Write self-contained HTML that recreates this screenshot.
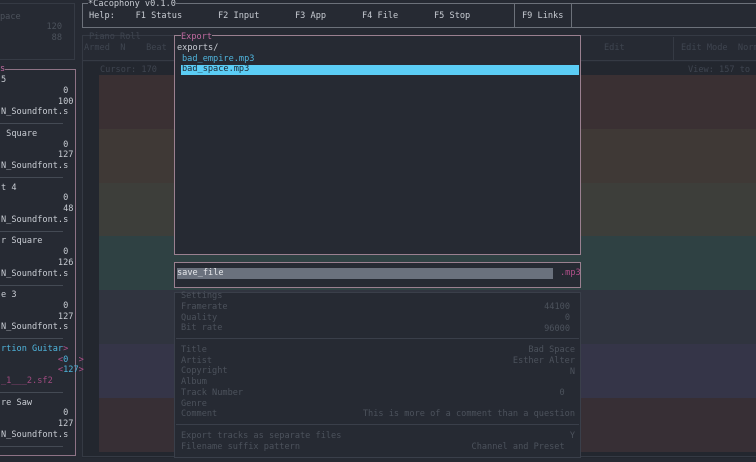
<!DOCTYPE html>
<html><head><meta charset="utf-8"><style>
body{margin:0;width:756px;height:462px;overflow:hidden;background:#262a33;font-family:"DejaVu Sans Mono","Liberation Mono",monospace;font-size:8.6px;color:#c8ccd3;position:relative}
.t{position:absolute;white-space:pre;line-height:11px}
.b{position:absolute;box-sizing:border-box}
.d{color:#4c525c}
.dd{color:#3f4550}
.r{text-align:right}
</style></head><body>
<div class="b" style="left:82px;top:62px;width:674px;height:396px;background:#23272f"></div>
<div class="b" style="left:99px;top:75px;width:657px;height:54px;background:#3a3033"></div>
<div class="b" style="left:99px;top:129px;width:657px;height:54px;background:#3f3936"></div>
<div class="b" style="left:99px;top:183px;width:657px;height:53px;background:#3d3e3a"></div>
<div class="b" style="left:99px;top:236px;width:657px;height:54px;background:#2f4143"></div>
<div class="b" style="left:99px;top:290px;width:657px;height:54px;background:#30343f"></div>
<div class="b" style="left:99px;top:344px;width:657px;height:54px;background:#353548"></div>
<div class="b" style="left:99px;top:398px;width:657px;height:54px;background:#372f35"></div>
<div class="b" style="left:82px;top:35px;width:680px;height:422px;border:1px solid #353a44"></div>
<div class="b" style="left:82px;top:60px;width:680px;height:1px;background:#353a44"></div>
<div class="b" style="left:673px;top:37px;width:1px;height:23px;background:#353a44"></div>
<div class="t dd" style="left:89px;top:32px">Piano Roll</div>
<div class="t dd" style="left:84px;top:43px">Armed  N    Beat</div>
<div class="t dd" style="left:100px;top:65px">Cursor: 170</div>
<div class="t dd" style="left:604px;top:43px">Edit</div>
<div class="t dd" style="left:681px;top:43px">Edit Mode  Norm</div>
<div class="t dd" style="left:688px;top:65px">View: 157 to 1</div>

<div class="b" style="left:82px;top:3px;width:680px;height:25px;border:1px solid #6c717a"></div>
<div class="b" style="left:514px;top:4px;width:1px;height:23px;background:#6c717a"></div>
<div class="b" style="left:571px;top:4px;width:1px;height:23px;background:#6c717a"></div>
<div class="t" style="left:88px;top:-1px;background:#262a33">*Cacophony v0.1.0</div>
<div class="t" style="left:89px;top:11px">Help:    F1 Status</div>
<div class="t" style="left:218px;top:11px">F2 Input</div>
<div class="t" style="left:295px;top:11px">F3 App</div>
<div class="t" style="left:362px;top:11px">F4 File</div>
<div class="t" style="left:434px;top:11px">F5 Stop</div>
<div class="t" style="left:522px;top:11px">F9 Links</div>

<div class="b" style="left:-2px;top:3px;width:77px;height:57px;border:1px solid #353a44"></div>
<div class="t d" style="left:0;top:12px">pace</div>
<div class="t d r" style="left:0;width:62px;top:22px">120</div>
<div class="t d r" style="left:0;width:62px;top:33px">88</div>
<div class="b" style="left:-2px;top:69px;width:78px;height:387px;border:1px solid #8e7386"></div>
<div class="t" style="left:0;top:64px;color:#c06aa0;background:#262a33">s</div>
<div class="t" style="left:1px;top:75px;line-height:10.75px">5
            0
           100
N_Soundfont.s

 Square
            0
           127
N_Soundfont.s

t 4
            0
            48
N_Soundfont.s

r Square
            0
           126
N_Soundfont.s

e 3
            0
           127
N_Soundfont.s

<span style="color:#4fb4dc">rtion Guitar</span><span style="color:#b0508a">></span>
           <span style="color:#b0508a">&lt;</span><span style="color:#4fb4dc">0</span>  <span style="color:#b0508a">></span>
           <span style="color:#b0508a">&lt;</span><span style="color:#4fb4dc">127</span><span style="color:#b0508a">></span>
<span style="color:#a04a80">_1___2.sf2</span>

re Saw
            0
           127
N_Soundfont.s</div>
<div class="b" style="left:0;top:123px;width:63px;height:1px;background:#444a54"></div>
<div class="b" style="left:0;top:177px;width:63px;height:1px;background:#444a54"></div>
<div class="b" style="left:0;top:231px;width:63px;height:1px;background:#444a54"></div>
<div class="b" style="left:0;top:285px;width:63px;height:1px;background:#444a54"></div>
<div class="b" style="left:0;top:338px;width:63px;height:1px;background:#444a54"></div>
<div class="b" style="left:0;top:392px;width:63px;height:1px;background:#444a54"></div>
<div class="b" style="left:0;top:446px;width:63px;height:1px;background:#444a54"></div>

<div class="b" style="left:174px;top:35px;width:407px;height:220px;border:1px solid #9a8090;background:#262a33"></div>
<div class="t" style="left:181px;top:32px;color:#c06aa0;background:#262a33">Export</div>
<div class="t" style="left:177px;top:43px">exports/</div>
<div class="t" style="left:182px;top:54px;color:#4fb4dc">bad_empire.mp3</div>
<div class="b" style="left:181px;top:65px;width:398px;height:10px;background:#5bcdf5"></div>
<div class="t" style="left:182px;top:64px;color:#1d2530">bad_space.mp3</div>

<div class="b" style="left:174px;top:262px;width:407px;height:26px;border:1px solid #9a8090;background:#262a33"></div>
<div class="b" style="left:177px;top:268px;width:376px;height:11px;background:#6a717d"></div>
<div class="t" style="left:177px;top:268px;color:#e4e6ea">save_file</div>
<div class="t" style="left:560px;top:268px;color:#b0508a">.mp3</div>

<div class="b" style="left:174px;top:292px;width:407px;height:166px;border:1px solid #3a3f4a;background:#262a33"></div>
<div class="b" style="left:176px;top:338px;width:403px;height:1px;background:#3a3f4a"></div>
<div class="b" style="left:176px;top:424px;width:403px;height:1px;background:#3a3f4a"></div>
<div class="t d" style="left:181px;top:291px;line-height:10.75px">Settings
Framerate
Quality
Bit rate

Title
Artist
Copyright
Album
Track Number
Genre
Comment

Export tracks as separate files
Filename suffix pattern</div>
<div class="t d r" style="left:300px;width:270px;top:302px;line-height:10.75px">44100
0
96000</div>
<div class="t d r" style="left:300px;width:275px;top:345px;line-height:10.75px">Bad Space
Esther Alter
N

0  </div>
<div class="t d r" style="left:300px;width:275px;top:409px">This is more of a comment than a question</div>
<div class="t d r" style="left:300px;width:275px;top:431px;line-height:10.75px">Y
Channel and Preset  </div>
</body></html>
